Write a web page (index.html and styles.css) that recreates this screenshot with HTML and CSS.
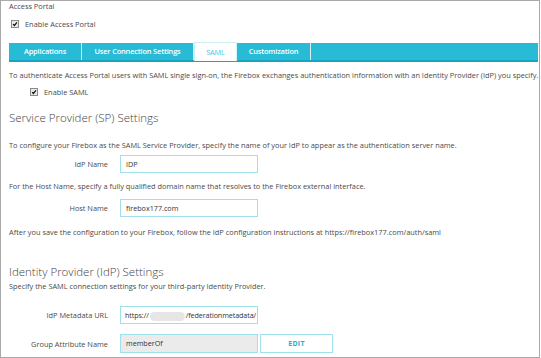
FILE: index.html
```html
<!DOCTYPE html>
<html lang="en">
<head>
    <meta charset="UTF-8">
    <title>Access Portal - SAML</title>
    <link rel="stylesheet" href="styles.css">
</head>
<body>
    <div class="panel">
        <div class="title">Access Portal</div>

        <label class="check-row">
            <span class="check"><svg viewBox="0 0 8 8"><path d="M1.5 4.2 L3.2 6 L6.6 1.8" /></svg></span>
            Enable Access Portal
        </label>

        <div class="tabs">
            <div class="tab tab-apps">Applications</div>
            <div class="tab tab-user">User Connection Settings</div>
            <div class="tab tab-saml active">SAML</div>
            <div class="tab tab-custom">Customization</div>
        </div>

        <p class="text intro">To authenticate Access Portal users with SAML single sign-on, the Firebox exchanges authentication information with an Identity Provider (IdP) you specify.</p>

        <label class="check-row indent">
            <span class="check"><svg viewBox="0 0 8 8"><path d="M1.5 4.2 L3.2 6 L6.6 1.8" /></svg></span>
            Enable SAML
        </label>

        <h2 class="heading">Service Provider (SP) Settings</h2>
        <p class="text after-heading">To configure your Firebox as the SAML Service Provider, specify the name of your IdP to appear as the authentication server name.</p>

        <div class="field first">
            <div class="field-label">IdP Name</div>
            <div class="input">IDP</div>
        </div>

        <p class="text between">For the Host Name, specify a fully qualified domain name that resolves to the Firebox external interface.</p>

        <div class="field">
            <div class="field-label">Host Name</div>
            <div class="input">firebox177.com</div>
        </div>

        <p class="text after-field">After you save the configuration to your Firebox, follow the IdP configuration instructions at https://firebox177.com/auth/saml</p>

        <h2 class="heading second">Identity Provider (IdP) Settings</h2>
        <p class="text sub">Specify the SAML connection settings for your third-party Identity Provider.</p>

        <div class="field url">
            <div class="field-label">IdP Metadata URL</div>
            <div class="input url-input">https://<span class="blur"></span>/federationmetadata/</div>
        </div>

        <div class="field group">
            <div class="field-label">Group Attribute Name</div>
            <div class="input readonly">memberOf</div>
            <div class="btn">EDIT</div>
        </div>
    </div>
</body>
</html>
```

FILE: styles.css
```css
body {
    margin: 0;
    background: #fff;
    font-family: "Open Sans", "DejaVu Sans", sans-serif;
    color: #4a4a4a;
}

.panel {
    width: 540px;
    height: 358px;
    box-sizing: border-box;
    border: 1px solid #a9a9a9;
    padding: 0 1px 0 8px;
    overflow: hidden;
}

.title {
    font-size: 7.4px;
    line-height: 11px;
}

.check-row {
    display: flex;
    align-items: center;
    gap: 6px;
    font-size: 7.4px;
    line-height: 12px;
    margin-top: 6px;
    padding-left: 2px;
}

.check-row.indent {
    margin-top: 5px;
    padding-left: 21px;
}

.check {
    width: 6px;
    height: 6px;
    border: 1px solid #8a8a8a;
    background: #e9e9e9;
    display: flex;
}

.check svg {
    width: 6px;
    height: 6px;
    fill: none;
    stroke: #111;
    stroke-width: 1.6;
}

.tabs {
    display: flex;
    margin-top: 13px;
    height: 17px;
    background: #27bbd6;
    border-bottom: 2px solid #17a6c2;
}

.tab {
    color: #fff;
    font-size: 7.4px;
    font-weight: 600;
    line-height: 17px;
    text-align: center;
    border-right: 1px solid #d8f2f7;
    letter-spacing: -0.15px;
}

.tab-apps { width: 72px; }
.tab-user { width: 111px; }
.tab-saml { width: 43px; }
.tab-custom { width: 73px; }

.tab.active {
    background: #fff;
    color: #55c3da;
    font-weight: 400;
    height: 19px;
    border-top: 1px solid #cfeef4;
    border-left: 1px solid #cfeef4;
    margin-top: -1px;
    box-sizing: border-box;
    line-height: 18px;
}

.text {
    margin: 0;
    font-size: 7.38px;
    line-height: 12px;
    white-space: nowrap;
}

.intro { margin-top: 7px; }

.heading {
    margin: 13px 0 0;
    font-size: 11.5px;
    font-weight: 300;
    line-height: 14px;
    color: #444;
}

.heading.second { margin-top: 27px; }

.after-heading { margin-top: 14px; }
.between { margin-top: 7px; }
.after-field { margin-top: 9px; }
.sub { margin-top: 1px; }

.field {
    display: flex;
    align-items: center;
    margin-top: 7px;
}

.field.first { margin-top: 4px; }
.field.url { margin-top: 14px; }
.field.group { margin-top: 10px; }

.field-label {
    width: 99px;
    text-align: right;
    padding-right: 12px;
    font-size: 7.38px;
}

.input {
    width: 138px;
    height: 18px;
    box-sizing: border-box;
    border: 1px solid #9fe0ec;
    padding: 0 5px;
    font-size: 7.2px;
    line-height: 16px;
    color: #333;
    white-space: nowrap;
    overflow: hidden;
}

.input.url-input {
    padding: 0 0 0 4px;
    letter-spacing: -0.1px;
}

.input.readonly {
    background: #ebebeb;
    height: 19px;
}

.blur {
    display: inline-block;
    width: 35px;
    height: 9px;
    vertical-align: middle;
    background: #e6e6e6;
    border-radius: 5px;
    margin: 0 1px;
}

.btn {
    margin-left: 2px;
    width: 73px;
    height: 19px;
    box-sizing: border-box;
    border: 1px solid #9fe0ec;
    text-align: center;
    font-size: 7px;
    font-weight: 700;
    line-height: 17px;
    color: #26b0cc;
    letter-spacing: 0.3px;
}
```
